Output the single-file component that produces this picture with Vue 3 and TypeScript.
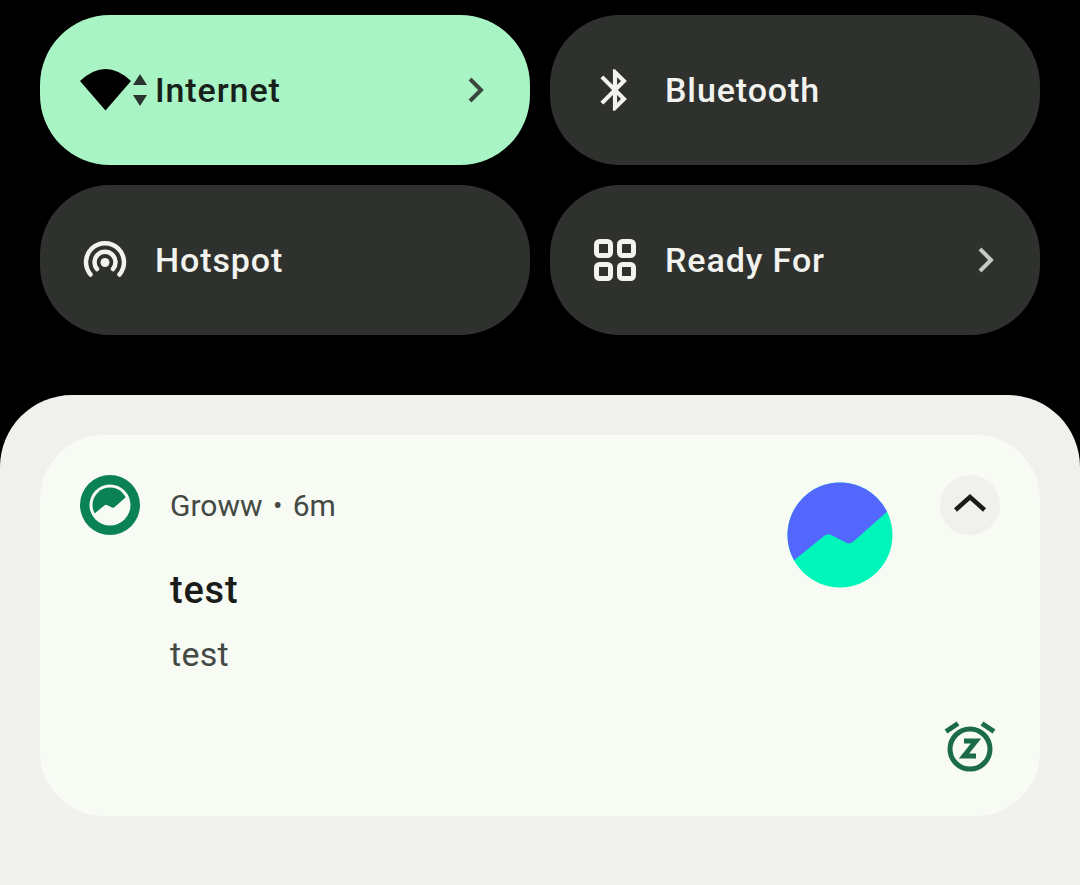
<template>
  <div class="shade">
    <section class="tiles">
      <div class="tile tile-on">
        <span class="tile-icon">
          <svg width="70" height="50" viewBox="0 0 70 50">
            <path d="M0 16 Q25.5 -8 51 16 L25.5 45.5 Z" fill="#000" />
            <polygon points="60,9 67,20 53,20" fill="#2b332e" />
            <polygon points="53,30 67,30 60,41" fill="#2b332e" />
          </svg>
        </span>
        <span class="tile-label">Internet</span>
        <svg class="tile-more" width="30" height="30" viewBox="0 0 30 30">
          <polyline points="10,4 21,15 10,26" />
        </svg>
      </div>

      <div class="tile">
        <span class="tile-icon">
          <svg width="50" height="50" viewBox="0 0 24 24">
            <path
              fill="#f2f3ef"
              d="M17.71 7.71L12 2h-1v7.59L6.41 5 5 6.41 10.59 12 5 17.59 6.41 19 11 14.41V22h1l5.71-5.71-4.3-4.29 4.3-4.29zM13 5.83l1.88 1.88L13 9.59V5.83zm1.88 10.46L13 18.17v-3.76l1.88 1.88z"
            />
          </svg>
        </span>
        <span class="tile-label">Bluetooth</span>
      </div>

      <div class="tile">
        <span class="tile-icon">
          <svg class="line-icon" width="50" height="50" viewBox="0 0 50 50">
            <path d="M10.5 39.5 A19 19 0 1 1 39.5 39.5" />
            <path d="M17 34 A10.5 10.5 0 1 1 33 34" />
            <circle class="dot" cx="25" cy="27.5" r="4.5" />
          </svg>
        </span>
        <span class="tile-label">Hotspot</span>
      </div>

      <div class="tile">
        <span class="tile-icon">
          <svg class="line-icon" width="50" height="50" viewBox="0 0 50 50">
            <rect v-for="sq in readySquares" :key="sq.x + '-' + sq.y" :x="sq.x" :y="sq.y" width="14" height="14" rx="3" />
          </svg>
        </span>
        <span class="tile-label">Ready For</span>
        <svg class="tile-more dim" width="30" height="30" viewBox="0 0 30 30">
          <polyline points="10,4 21,15 10,26" />
        </svg>
      </div>
    </section>

    <section class="panel">
      <article class="card">
        <div class="app-icon">
          <svg width="60" height="60" viewBox="-30 -30 60 60">
            <defs>
              <clipPath id="small-clip"><circle r="17.5" /></clipPath>
              <clipPath id="big-clip"><circle r="52.5" /></clipPath>
            </defs>
            <circle r="30" fill="#0b8158" />
            <circle r="20.5" fill="#f7fbf4" />
            <g clip-path="url(#small-clip)">
              <path :d="chartTop" fill="#0b8158" transform="scale(0.337)" />
            </g>
          </svg>
        </div>

        <div class="content">
          <div class="meta">
            <span>{{ appName }}</span>
            <span class="sep">•</span>
            <span>{{ age }}</span>
          </div>
          <div class="title">test</div>
          <div class="text">test</div>
        </div>

        <svg class="picture" width="106" height="106" viewBox="-53 -53 106 106">
          <circle r="52.5" fill="#00f5ba" />
          <g clip-path="url(#big-clip)">
            <path :d="chartTop" fill="#5367ff" />
          </g>
        </svg>

        <div class="actions">
          <button class="expand" type="button">
            <svg width="60" height="60" viewBox="0 0 60 60">
              <polyline points="15.5,35 30,22 44.5,35" />
            </svg>
          </button>
          <svg class="snooze" width="54" height="54" viewBox="0 0 54 54">
            <circle cx="27" cy="28" r="20" />
            <path d="M3 10.5 L15 2.5 M51 10.5 L39 2.5" />
            <polyline points="21,20 33,20 21,35 33,35" />
          </svg>
        </div>
      </article>
    </section>
  </div>
</template>

<script setup lang="ts">
const appName = "Groww";
const age = "6m";

// upper part of the logo, everything above the chart line
const chartTop =
  "M-60 36 L-45 24.5 L-16 1 Q-12.3 -2 -8 0.5 L6 7.5 Q10 10 14 6 L46.7 -23 L60 -34 L60 -60 L-60 -60 Z";

const readySquares = [
  { x: 6.5, y: 6.5 },
  { x: 29.5, y: 6.5 },
  { x: 6.5, y: 29.5 },
  { x: 29.5, y: 29.5 },
];
</script>

<style scoped>
.shade {
  display: flex;
  flex-direction: column;
  height: 885px;
  overflow: hidden;
  background: #000;
  font-family: Roboto, "Noto Sans", sans-serif;
}

.tiles {
  display: grid;
  grid-template-columns: 490px 490px;
  grid-auto-rows: 150px;
  gap: 20px;
  padding: 15px 40px 60px;
}

.tile {
  display: flex;
  align-items: center;
  padding: 0 40px;
  border-radius: 70px;
  background: #2f312e;
  color: #f2f3ef;
}

.tile-on {
  background: #a9f4c4;
  color: #17201b;
}

.tile-icon {
  display: flex;
  flex: none;
  width: 75px;
}

.tile-label {
  flex: 1;
  font-size: 34px;
  font-weight: 500;
  letter-spacing: 0.9px;
}

.tile-more {
  flex: none;
  fill: none;
  stroke: #3c4640;
  stroke-width: 4;
}

.tile-more.dim {
  stroke: #c3cac4;
}

.line-icon {
  fill: none;
  stroke: #f2f3ef;
  stroke-width: 5;
  stroke-linecap: round;
}

.line-icon path {
  stroke-width: 4.5;
}

.line-icon .dot {
  fill: #f2f3ef;
  stroke: none;
}

.panel {
  flex: 1;
  padding: 40px 40px 0;
  border-radius: 72px 72px 0 0;
  background: #f0f0ec;
}

.card {
  display: flex;
  height: 381px;
  padding: 40px 40px 41px;
  box-sizing: border-box;
  border-radius: 64px;
  background: #f7fbf4;
}

.app-icon {
  flex: none;
  height: 60px;
  margin-right: 30px;
}

.content {
  flex: 1;
}

.meta {
  display: flex;
  align-items: center;
  gap: 10.4px;
  height: 60px;
  padding-top: 1px;
  box-sizing: border-box;
  font-size: 30px;
  color: #444944;
}

.sep {
  font-size: 28px;
}

.title {
  margin-top: 30px;
  font-size: 38px;
  line-height: 50px;
  font-weight: 500;
  letter-spacing: 0.8px;
  color: #1a1c1a;
}

.text {
  margin-top: 16px;
  font-size: 34px;
  line-height: 46px;
  letter-spacing: 0.3px;
  color: #444944;
}

.picture {
  flex: none;
  margin: 7px 47px 0 0;
}

.actions {
  display: flex;
  flex-direction: column;
  align-items: center;
  justify-content: space-between;
  flex: none;
  width: 60px;
}

.expand {
  width: 60px;
  height: 60px;
  padding: 0;
  border: 0;
  border-radius: 50%;
  background: #f0f0ec;
}

.expand svg {
  display: block;
  fill: none;
  stroke: #1a1c1a;
  stroke-width: 4.5;
}

.snooze {
  fill: none;
  stroke: #1b6b47;
  stroke-width: 5;
}
</style>

<style>
html,
body {
  background: #000;
}
</style>
